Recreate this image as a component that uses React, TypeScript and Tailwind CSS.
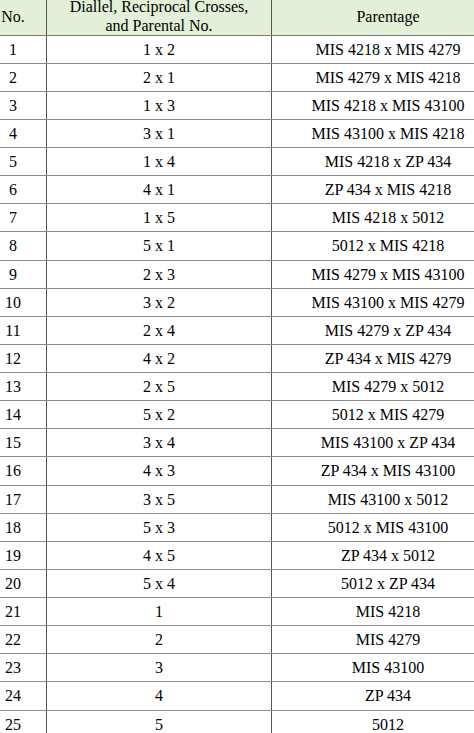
const rows: [string, string][] = [
  ["1 x 2", "MIS 4218 x MIS 4279"],
  ["2 x 1", "MIS 4279 x MIS 4218"],
  ["1 x 3", "MIS 4218 x MIS 43100"],
  ["3 x 1", "MIS 43100 x MIS 4218"],
  ["1 x 4", "MIS 4218 x ZP 434"],
  ["4 x 1", "ZP 434 x MIS 4218"],
  ["1 x 5", "MIS 4218 x 5012"],
  ["5 x 1", "5012 x MIS 4218"],
  ["2 x 3", "MIS 4279 x MIS 43100"],
  ["3 x 2", "MIS 43100 x MIS 4279"],
  ["2 x 4", "MIS 4279 x ZP 434"],
  ["4 x 2", "ZP 434 x MIS 4279"],
  ["2 x 5", "MIS 4279 x 5012"],
  ["5 x 2", "5012 x MIS 4279"],
  ["3 x 4", "MIS 43100 x ZP 434"],
  ["4 x 3", "ZP 434 x MIS 43100"],
  ["3 x 5", "MIS 43100 x 5012"],
  ["5 x 3", "5012 x MIS 43100"],
  ["4 x 5", "ZP 434 x 5012"],
  ["5 x 4", "5012 x ZP 434"],
  ["1", "MIS 4218"],
  ["2", "MIS 4279"],
  ["3", "MIS 43100"],
  ["4", "ZP 434"],
  ["5", "5012"],
];

export default function App() {
  return (
    <div className="w-[474px] h-[733px] overflow-hidden bg-white text-black text-[16px] leading-[19px] font-['Liberation_Serif']">
      <div className="-ml-[20px] -mt-[3px] w-[524px]">
        <div className="grid grid-cols-[67px_225px_232px] bg-[#e2efd9] h-[38.5px] border-b border-[#7a7a7a]">
          <div className="flex items-center justify-center border-r border-[#555]">No.</div>
          <div className="flex items-center justify-center text-center border-r border-[#555]">
            Diallel, Reciprocal Crosses,
            <br />
            and Parental No.
          </div>
          <div className="flex items-center justify-center">Parentage</div>
        </div>
        {rows.map(([cross, parent], i) => (
          <div
            key={i}
            className="grid grid-cols-[67px_225px_232px] h-[28.125px] border-b border-[#8a8a8a]"
          >
            <div className="flex items-center justify-center border-r border-[#555]">{i + 1}</div>
            <div className="flex items-center justify-center border-r border-[#555]">{cross}</div>
            <div className="flex items-center justify-center whitespace-nowrap">{parent}</div>
          </div>
        ))}
      </div>
    </div>
  );
}
